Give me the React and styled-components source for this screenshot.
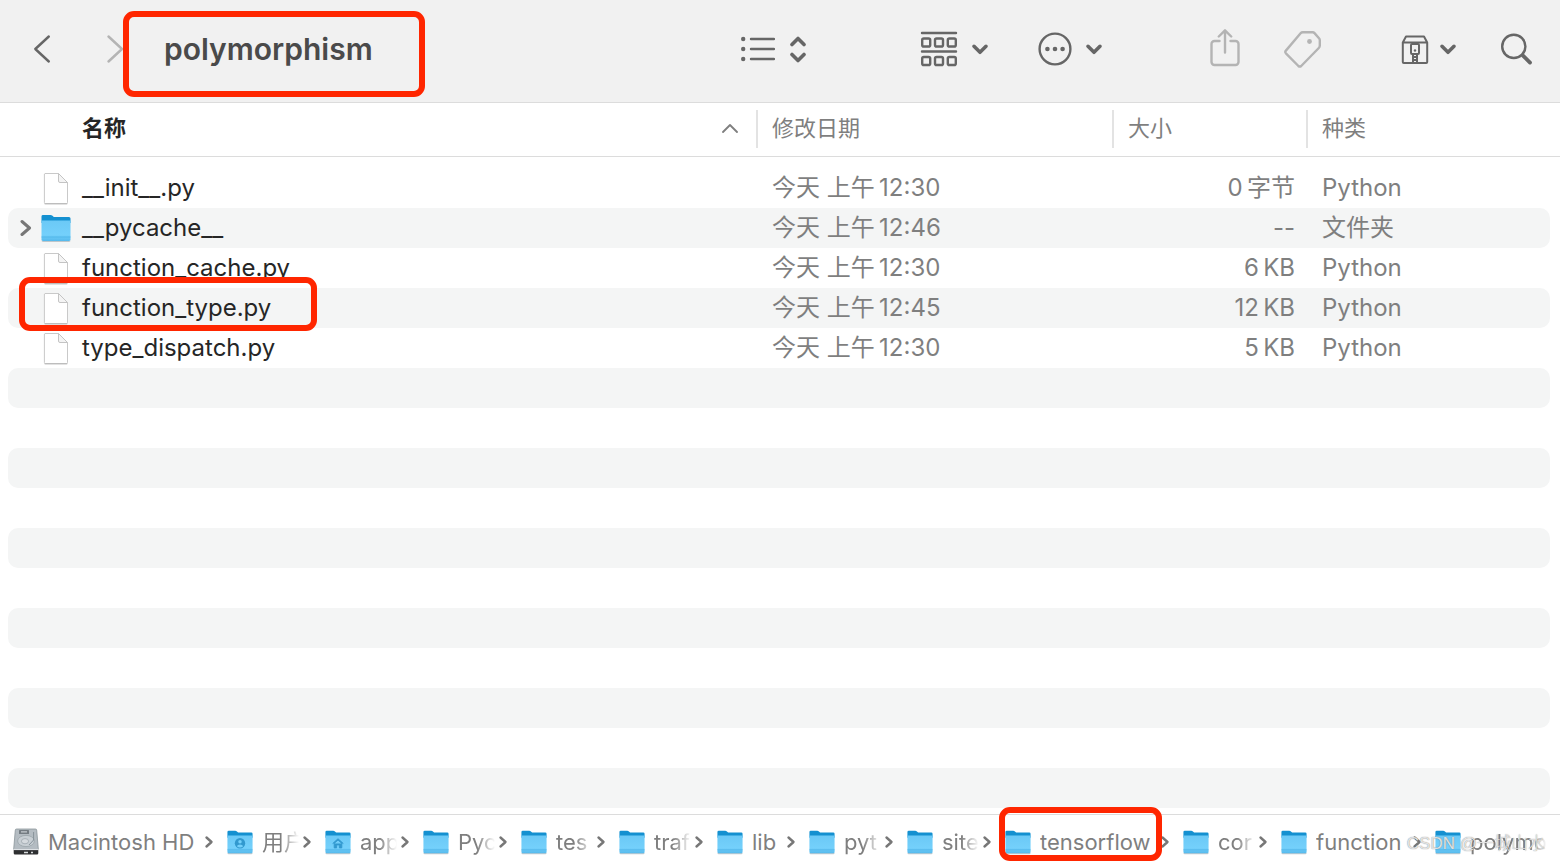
import styled, { createGlobalStyle, css } from 'styled-components';

const theme = {
  font: `Inter, "Noto Sans CJK SC", sans-serif`,
  text: '#262626',
  muted: '#7f7f7f',
  icon: '#666666',
  disabled: '#b4b4b4',
  stripe: '#f4f5f5',
  line: '#dcdcdc',
  mark: '#ff2600',
};

const GlobalStyle = createGlobalStyle`
  * {
    box-sizing: border-box;
  }

  body {
    margin: 0;
    background: #fff;
    font-family: ${theme.font};
    color: ${theme.text};
  }

  button {
    padding: 0;
    border: 0;
    background: none;
    font: inherit;
    color: inherit;
    text-align: left;
  }
`;

const Window = styled.div`
  position: relative;
  display: flex;
  flex-direction: column;
  min-height: 100vh;
  overflow: hidden;
`;

const Toolbar = styled.header`
  display: flex;
  align-items: center;
  height: 103px;
  padding: 0 28px 4px 32px;
  background: #f1f1f1;
  border-bottom: 1px solid ${theme.line};
`;

const Nav = styled.nav`
  display: flex;
  gap: 53px;
`;

const Title = styled.h1`
  position: relative;
  margin: 0 auto 0 39px;
  font-size: 30px;
  line-height: 40px;
  font-weight: 600;
  color: #4a4a4a;
`;

const ToolGroup = styled.div`
  display: flex;
  align-items: center;
  gap: ${({ $gap }) => $gap || 44}px;
  margin-left: ${({ $before }) => $before || 0}px;
`;

const ToolButton = styled.button`
  display: flex;
  align-items: center;
  gap: ${({ $gap }) => $gap || 13}px;
  color: ${theme.icon};

  &:disabled {
    color: ${theme.disabled};
  }
`;

const Icon = styled.svg`
  display: block;
  flex: none;
  fill: none;
  stroke: currentColor;
  stroke-width: 2.4;
  stroke-linecap: round;
  stroke-linejoin: round;
`;

// red frame drawn over the part being pointed at
const Mark = styled.span`
  position: absolute;
  z-index: 2;
  border: 6px solid ${theme.mark};
  border-radius: 11px;
  pointer-events: none;
`;

const TitleMark = styled(Mark)`
  inset: -18px -52px -28px -41px;
`;

const RowMark = styled(Mark)`
  top: -11px;
  left: 11px;
  width: 298px;
  height: 54px;
`;

const CrumbMark = styled(Mark)`
  inset: -20px 21px -4px -6px;
`;

const Main = styled.main`
  flex: 1;
`;

const Table = styled.table`
  display: block;
`;

const rowGrid = css`
  display: grid;
  grid-template-columns: minmax(0, 1fr) 356px 194px 244px;
`;

const Head = styled.thead`
  display: block;
  padding: 0 10px 0 8px;
  border-bottom: 1px solid ${theme.line};
`;

const HeadRow = styled.tr`
  ${rowGrid}
`;

const HeadCell = styled.th`
  padding: 7px 0 8px;
  font-size: 22px;
  line-height: 36px;
  font-weight: ${({ $active }) => ($active ? 600 : 400)};
  color: ${({ $active }) => ($active ? theme.text : theme.muted)};
`;

const SortButton = styled.button`
  display: flex;
  align-items: center;
  justify-content: space-between;
  width: 100%;
  height: 38px;
  padding: 0 17px 2px ${({ $first }) => ($first ? 74 : 14)}px;
  border-left: ${({ $first }) => ($first ? 0 : 2)}px solid #e3e3e3;
`;

const Body = styled.tbody`
  display: block;
  padding: 11px 10px 6px 8px;
`;

const Row = styled.tr`
  ${rowGrid}
  position: relative;
  height: 40px;
  border-radius: 10px;

  &:nth-child(even) {
    background: ${theme.stripe};
  }
`;

const Cell = styled.td`
  padding: 0 11px 0 16px;
  font-size: 24px;
  line-height: 40px;
  color: ${theme.muted};
  white-space: nowrap;
  text-align: ${({ $right }) => ($right ? 'right' : 'left')};
`;

const NameCell = styled(Cell)`
  display: grid;
  grid-template-columns: 22px 30px 1fr;
  column-gap: 11px;
  align-items: center;
  padding: 0;
  color: ${theme.text};
`;

const Disclosure = styled.button`
  display: flex;
  justify-content: flex-end;
  margin-right: -2px;
  color: #777;
`;

const FileIconBox = styled.span`
  display: flex;
  justify-content: center;
`;

const PathBar = styled.nav`
  height: 48px;
  border-top: 1px solid ${theme.line};
`;

const Crumbs = styled.ol`
  display: flex;
  margin: 0;
  padding: 12px 0 0 13px;
  list-style: none;
`;

const Crumb = styled.li`
  position: relative;
  display: flex;
  align-items: center;
  flex: none;
  height: 30px;
  color: #777;
`;

const CrumbLink = styled.a`
  display: flex;
  align-items: center;
  gap: 9px;
  color: ${theme.muted};
  text-decoration: none;
`;

const CrumbLabel = styled.span`
  width: ${({ $width }) => $width}px;
  overflow: hidden;
  font-size: 22px;
  line-height: 30px;
  white-space: nowrap;
  ${({ $fade }) =>
    $fade &&
    css`
      mask-image: linear-gradient(to left, transparent, #000 18px);
    `}
`;

const Watermark = styled.span`
  position: absolute;
  right: 15px;
  bottom: 6px;
  z-index: 3;
  font-family: "Liberation Sans", "Noto Sans CJK SC", sans-serif;
  font-size: 17px;
  line-height: 24px;
  font-weight: 300;
  color: rgba(255, 255, 255, 0.8);
  text-shadow: 0 0 1px #666;
  pointer-events: none;
`;

function ChevronDown() {
  return (
    <Icon width="18" height="12" viewBox="0 0 18 12">
      <g strokeWidth="3.6">
        <path d="M3 3.3 9 9.3 15 3.3" />
      </g>
    </Icon>
  );
}

function ListIcon() {
  return (
    <Icon width="34" height="26" viewBox="0 0 34 26">
      <path d="M10 3H33M10 13H33M10 23H33" />
      <g fill="currentColor" stroke="none">
        <circle cx="2.2" cy="3" r="2.2" />
        <circle cx="2.2" cy="13" r="2.2" />
        <circle cx="2.2" cy="23" r="2.2" />
      </g>
    </Icon>
  );
}

function UpDownIcon() {
  return (
    <Icon width="18" height="28" viewBox="0 0 18 28">
      <g strokeWidth="3.6">
        <path d="M3 9.5 9 3.5 15 9.5M3 19.5 9 25.5 15 19.5" />
      </g>
    </Icon>
  );
}

function GroupIcon() {
  return (
    <Icon width="38" height="36" viewBox="0 0 38 36">
      <path d="M2 2H36M2 20.5H36" />
      {[7.5, 26].map((y) =>
        [2.2, 15, 27.8].map((x) => (
          <rect key={`${x}-${y}`} x={x} y={y} width="8" height="8" rx="1.6" />
        ))
      )}
    </Icon>
  );
}

function MoreIcon() {
  return (
    <Icon width="34" height="34" viewBox="0 0 34 34">
      <circle cx="17" cy="17" r="15.4" />
      <g fill="currentColor" stroke="none">
        <circle cx="9.4" cy="17" r="2.3" />
        <circle cx="17" cy="17" r="2.3" />
        <circle cx="24.6" cy="17" r="2.3" />
      </g>
    </Icon>
  );
}

function ShareIcon() {
  return (
    <Icon width="30" height="40" viewBox="0 0 30 40">
      <path d="M9.5 12H4.5a3 3 0 0 0-3 3V33a3 3 0 0 0 3 3H25.5a3 3 0 0 0 3-3V15a3 3 0 0 0-3-3H20.5" />
      <path d="M15 23.5V1.8M8.8 7.5 15 1.3 21.2 7.5" />
    </Icon>
  );
}

function TagIcon() {
  return (
    <Icon width="38" height="38" viewBox="0 0 38 38">
      <path d="M18.8 2.2H28.6Q29.7 2.2 30.5 3.1L35 8.2Q35.8 9.1 35.8 10.3V15.5Q35.8 17 34.8 18L17.2 36Q15.8 37.2 14.4 36L1.9 23.3Q.7 22 1.9 20.6L16.6 3.2Q17.5 2.2 18.8 2.2Z" />
      <circle cx="25.5" cy="11.5" r="2.4" fill="currentColor" stroke="none" />
    </Icon>
  );
}

function ArchiveIcon() {
  return (
    <Icon width="28" height="30" viewBox="0 0 28 30">
      <g strokeWidth="2">
        <path d="M1.8 8.5 5 2.5H23L26.2 8.5V28Q26.2 29 25.2 29H2.8Q1.8 29 1.8 28ZM1.8 8.5H26.2" />
        <rect x="10" y="10" width="8" height="10" rx="1" />
        <path d="M12 20V28.5M16 20V28.5M12 23H16M12 26H16" />
      </g>
      <circle cx="14" cy="16.5" r="1.2" fill="currentColor" stroke="none" />
    </Icon>
  );
}

function SearchIcon() {
  return (
    <Icon width="32" height="34" viewBox="0 0 32 34">
      <circle cx="13.8" cy="14.4" r="11.6" />
      <path d="M22.2 22.8 23 23.6" />
      <g strokeWidth="3.8">
        <path d="M23 23.6 30 30.6" />
      </g>
    </Icon>
  );
}

function NavIcon({ forward }) {
  return (
    <Icon width="20" height="30" viewBox="0 0 20 30">
      <path d={forward ? 'M3.5 2.5 17 15 3.5 27.5' : 'M16.8 2.5 3.3 15 16.8 27.5'} />
    </Icon>
  );
}

function DocumentIcon() {
  return (
    <svg width="28" height="34" viewBox="0 0 28 34">
      <path d="M3 2.5H16.5L25.5 11.5V31.5Q25.5 32.7 24.3 32.7H3.6Q2.4 32.7 2.4 31.5V3Z" fill="#fff" stroke="#c9c9c9" strokeWidth="1" />
      <path d="M2.6 32.8H25.3" stroke="#b4b4b4" strokeWidth="1" />
      <path d="M16.5 2.5V10Q16.5 11.5 18 11.5H25.5Z" fill="#f4f4f4" stroke="#c4c4c4" strokeWidth="1" />
    </svg>
  );
}

function FolderIcon({ width = 26, glyph }) {
  return (
    <svg width={width} height={width} viewBox="0 0 30 30">
      <defs>
        <linearGradient id="folder-front" x1="0" y1="0" x2="0" y2="1">
          <stop offset="0" stopColor="#6bc9f6" />
          <stop offset=".7" stopColor="#74d0fb" />
          <stop offset="1" stopColor="#55b9ec" />
        </linearGradient>
      </defs>
      <path d="M.5 27.6H29.5Q29.5 29 28 29H2Q.5 29 .5 27.6Z" fill="#9aa7ad" opacity=".6" />
      <path d="M.5 3.4Q.5 2 2 2H9.5Q10.5 2 11.5 2.8L12.8 3.9H28Q29.5 3.9 29.5 5.4V10H.5Z" fill="#1490d0" />
      <path d="M.5 7.6H29.5V26.6Q29.5 28 28 28H2Q.5 28 .5 26.6Z" fill="url(#folder-front)" />
      <path d="M.5 24H29.5" stroke="#4db2e6" strokeWidth=".8" />
      {glyph === 'user' && (
        <g>
          <circle cx="15" cy="16.5" r="6" fill="#3299cf" />
          <circle cx="15" cy="14.8" r="2" fill="#74d0fb" />
          <path d="M11.4 20Q12 17.8 15 17.8T18.6 20Q17 21.4 15 21.4T11.4 20Z" fill="#74d0fb" />
        </g>
      )}
      {glyph === 'home' && (
        <path d="M8.8 16.8 15 11.2 21.2 16.8M10.6 16.6V21.8H13.4V18.4H16.6V21.8H19.4V16.6L15 12.8Z" fill="#3299cf" stroke="#3299cf" strokeWidth="1" />
      )}
    </svg>
  );
}

function DiskIcon() {
  return (
    <svg width="26" height="28" viewBox="0 0 26 28">
      <path d="M3.5 1H22.5Q23.5 1 23.7 2L25.3 21H.7L2.3 2Q2.5 1 3.5 1Z" fill="#b4bcc2" stroke="#8c959b" strokeWidth=".8" />
      <path d="M.7 21.5H25.3V25Q25.3 26.5 24 26.5H2Q.7 26.5 .7 25Z" fill="#2e2f31" />
      <path d="M.8 21.4H25.2" stroke="#dde1e4" strokeWidth="1.4" />
      <rect x="6" y="2" width="10" height="4" rx=".6" fill="#747c82" />
      <path d="M8 3.9H14" stroke="#d8dde0" strokeWidth="1" />
      <ellipse cx="13" cy="13" rx="8.4" ry="5.6" fill="#c8cfd4" stroke="#9aa4aa" strokeWidth=".8" />
      <ellipse cx="12" cy="13.2" rx="3.6" ry="2.6" fill="#d5dade" stroke="#96a0a7" strokeWidth=".7" />
      <path d="M20.6 4V12L16 17" fill="none" stroke="#87929a" strokeWidth="1" />
      <path d="M11 24.5H15M18 24.5H20" stroke="#d6d9db" strokeWidth="1.4" />
    </svg>
  );
}

const files = [
  { name: '__init__.py', date: '今天 上午\u200912:30', size: '0\u2009字节', kind: 'Python' },
  { name: '__pycache__', date: '今天 上午\u200912:46', size: '--', kind: '文件夹', folder: true },
  { name: 'function_cache.py', date: '今天 上午\u200912:30', size: '6\u2009KB', kind: 'Python' },
  { name: 'function_type.py', date: '今天 上午\u200912:45', size: '12\u2009KB', kind: 'Python', marked: true },
  { name: 'type_dispatch.py', date: '今天 上午\u200912:30', size: '5\u2009KB', kind: 'Python' },
];

const emptyRows = Array.from({ length: 11 }, (_, i) => i);

const crumbs = [
  { label: 'Macintosh HD', width: 153, disk: true },
  { label: '用户', width: 37, fade: true, glyph: 'user' },
  { label: 'app', width: 37, fade: true, glyph: 'home' },
  { label: 'Pyc', width: 37, fade: true },
  { label: 'tes', width: 37, fade: true },
  { label: 'traf', width: 37, fade: true },
  { label: 'lib', width: 31 },
  { label: 'pyt', width: 37, fade: true },
  { label: 'site', width: 37, fade: true },
  { label: 'tensorflow', width: 117, marked: true },
  { label: 'cor', width: 37, fade: true },
  { label: 'function', width: 93 },
  { label: 'polymo', width: 77, fade: true },
];

function FileRow({ file }) {
  return (
    <Row>
      <NameCell>
        {file.folder ? (
          <Disclosure aria-label="展开">
            <Icon width="12" height="20" viewBox="0 0 12 20">
              <g strokeWidth="3">
                <path d="M2 3.5 9.5 10 2 16.5" />
              </g>
            </Icon>
          </Disclosure>
        ) : (
          <span />
        )}
        <FileIconBox>{file.folder ? <FolderIcon width={30} /> : <DocumentIcon />}</FileIconBox>
        <span>{file.name}</span>
        {file.marked && <RowMark />}
      </NameCell>
      <Cell>{file.date}</Cell>
      <Cell $right>{file.size}</Cell>
      <Cell>{file.kind}</Cell>
    </Row>
  );
}

export default function App() {
  return (
    <Window>
      <GlobalStyle />
      <Toolbar>
        <Nav>
          <ToolButton aria-label="后退">
            <NavIcon />
          </ToolButton>
          <ToolButton aria-label="前进" disabled>
            <NavIcon forward />
          </ToolButton>
        </Nav>
        <Title>
          polymorphism
          <TitleMark />
        </Title>
        <ToolGroup>
          <ToolButton aria-label="显示方式" $gap={14}>
            <ListIcon />
            <UpDownIcon />
          </ToolButton>
        </ToolGroup>
        <ToolGroup $before={113} $gap={49}>
          <ToolButton aria-label="分组">
            <GroupIcon />
            <ChevronDown />
          </ToolButton>
          <ToolButton aria-label="更多操作">
            <MoreIcon />
            <ChevronDown />
          </ToolButton>
        </ToolGroup>
        <ToolGroup $before={107}>
          <ToolButton aria-label="共享" disabled>
            <ShareIcon />
          </ToolButton>
          <ToolButton aria-label="标签" disabled>
            <TagIcon />
          </ToolButton>
        </ToolGroup>
        <ToolGroup $before={79} $gap={43}>
          <ToolButton aria-label="归档" $gap={10}>
            <ArchiveIcon />
            <ChevronDown />
          </ToolButton>
          <ToolButton aria-label="搜索">
            <SearchIcon />
          </ToolButton>
        </ToolGroup>
      </Toolbar>
      <Main>
        <Table>
          <Head>
            <HeadRow>
              <HeadCell $active>
                <SortButton $first>
                  名称
                  <Icon width="18" height="10" viewBox="0 0 18 10" color={theme.muted}>
                    <g strokeWidth="1.8">
                      <path d="M2 9 9 2 16 9" />
                    </g>
                  </Icon>
                </SortButton>
              </HeadCell>
              <HeadCell>
                <SortButton>修改日期</SortButton>
              </HeadCell>
              <HeadCell>
                <SortButton>大小</SortButton>
              </HeadCell>
              <HeadCell>
                <SortButton>种类</SortButton>
              </HeadCell>
            </HeadRow>
          </Head>
          <Body>
            {files.map((file) => (
              <FileRow key={file.name} file={file} />
            ))}
            {emptyRows.map((i) => (
              <Row key={i} aria-hidden="true">
                <Cell />
              </Row>
            ))}
          </Body>
        </Table>
      </Main>
      <PathBar aria-label="路径">
        <Crumbs>
          {crumbs.map((crumb, i) => (
            <Crumb key={crumb.label}>
              <CrumbLink href="#">
                {crumb.disk ? <DiskIcon /> : <FolderIcon glyph={crumb.glyph} />}
                <CrumbLabel $width={crumb.width} $fade={crumb.fade}>
                  {crumb.label}
                </CrumbLabel>
              </CrumbLink>
              {i < crumbs.length - 1 && (
                <Icon width="26" height="14" viewBox="0 0 26 14">
                  <path d="M5.5 2.5 10.5 7 5.5 11.5" />
                </Icon>
              )}
              {crumb.marked && <CrumbMark />}
            </Crumb>
          ))}
        </Crumbs>
      </PathBar>
      <Watermark>CSDN @一城山水</Watermark>
    </Window>
  );
}
